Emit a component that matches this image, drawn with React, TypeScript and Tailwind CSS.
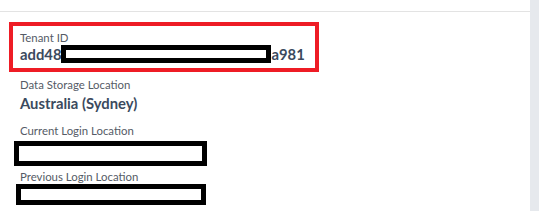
import React from "react";

export default function App() {
  const font = { fontFamily: "Lato, 'Open Sans', sans-serif" };
  return (
    <div className="flex h-[212px] w-[539px] bg-white" style={font}>
      <div className="flex w-[530px] flex-col">
        <div className="h-[12px] border-b border-[#e3e3e3]" />
        <div className="ml-[9px] mt-[10px] h-[50px] w-[310px] border-4 border-[#ee1c25] pl-[7px] pt-[5px]">
          <div className="text-[11.4px] leading-[14px] text-[#555b66]">Tenant ID</div>
          <div className="flex items-center text-[14.8px] font-bold leading-[18px] text-[#3b4a5e]">
            <span>add48</span>
            <span className="inline-block h-[18px] w-[210px] border-[5px] border-black bg-white" />
            <span>a981</span>
          </div>
        </div>
        <div className="ml-[20px] mt-[6px] text-[11.4px] leading-[14px] text-[#555b66]">Data Storage Location</div>
        <div className="ml-[20px] mt-[2px] text-[14.8px] font-bold leading-[18px] text-[#3b4a5e]">Australia (Sydney)</div>
        <div className="ml-[20px] mt-[12px] text-[11.4px] leading-[14px] text-[#555b66]">Current Login Location</div>
        <div className="ml-[14px] mt-[3px] h-[25px] w-[193px] border-[5px] border-black bg-white" />
        <div className="ml-[20px] mt-[4px] text-[11.4px] leading-[14px] text-[#555b66]">Previous Login Location</div>
        <div className="ml-[16px] mt-[0px] h-[21px] w-[190px] border-[5px] border-black bg-white" />
      </div>
      <div className="h-[211px] w-[9px] bg-[#e6e9ed]" />
    </div>
  );
}
